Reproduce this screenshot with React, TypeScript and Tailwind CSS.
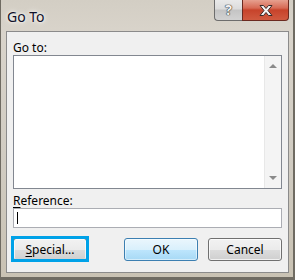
import React from "react";

const font = { fontFamily: '"Noto Sans", "Segoe UI", "Open Sans", sans-serif' };

function Btn({ children, def }: { children: React.ReactNode; def?: boolean }) {
  return (
    <div
      className={`w-[74px] h-[23px] rounded-[3px] border flex items-center justify-center text-[12px] text-black ${
        def
          ? "border-[#3c7fb1] bg-[linear-gradient(#eaf6fd_0%,#d9f0fc_50%,#bee6fd_50%,#a7d9f5_100%)] shadow-[inset_0_0_0_1px_#ffffff80]"
          : "border-[#707070] bg-[linear-gradient(#f2f2f2_0%,#ebebeb_50%,#dddddd_50%,#cfcfcf_100%)] shadow-[inset_0_0_0_1px_#ffffffb0]"
      }`}
    >
      {children}
    </div>
  );
}

export default function App() {
  return (
    <div
      className="w-[295px] h-[280px] relative overflow-hidden bg-[linear-gradient(180deg,#d3cec4_0%,#d9d4cb_12%,#d0cbc1_60%,#c9c2b3_100%)]"
      style={font}
    >
      {/* frame outer edges */}
      <div className="absolute inset-0 border-l border-r-2 border-b-[3px] border-[#6f6b62] pointer-events-none" />
      {/* title bar */}
      <div className="h-[31px] flex items-start justify-between pl-[7px] pr-[6px]">
        <div className="pt-[7px] text-[14px] leading-[19px] text-[#101028] [text-shadow:0_0_6px_#ffffff,0_0_3px_#ffffff]">
          Go To
        </div>
        <div className="flex">
          <div className="w-[28px] h-[21px] rounded-bl-[4px] border border-t-0 border-r-0 border-[#6d6d6d] bg-[linear-gradient(#e9e9e9_0%,#dcdcdc_45%,#c4c4c4_50%,#d2d2d2_100%)] flex items-center justify-center">
            <span className="text-[14px] font-bold leading-none text-[#f4f4f4] [text-shadow:0_0_1px_#333,0_0_1px_#333,0_0_1px_#333]">
              ?
            </span>
          </div>
          <div className="w-[47px] h-[21px] rounded-br-[4px] border border-t-0 border-[#6b2a20] bg-[linear-gradient(#e6a08f_0%,#d76a55_40%,#c7432b_50%,#d05a40_100%)] flex items-center justify-center">
            <svg width="16" height="13" viewBox="0 0 16 13">
              <path
                d="M2 1.5 L5.5 1.5 L8 4.5 L10.5 1.5 L14 1.5 L10 6.5 L14 11.5 L10.5 11.5 L8 8.5 L5.5 11.5 L2 11.5 L6 6.5 Z"
                fill="#f4f4f4"
                stroke="#3a2a28"
                strokeWidth="1"
                strokeLinejoin="round"
              />
            </svg>
          </div>
        </div>
      </div>
      {/* client area */}
      <div className="ml-[6px] w-[283px] h-[242px] border border-[#8b8b8b] bg-[#f0f0f0] px-[6px] flex flex-col text-[12px] text-black">
        <div className="pt-[8px] leading-[15px] h-[23px]">Go to:</div>
        <div className="h-[134px] border border-[#828790] bg-white flex justify-end">
          <div className="w-[17px] h-full bg-[#f4f4f4] border-l border-[#e8e8e8] flex flex-col items-center justify-between py-[8px]">
            <div className="w-0 h-0 border-l-[4px] border-r-[4px] border-b-[4px] border-l-transparent border-r-transparent border-b-[#8a8a8a]" />
            <div className="w-0 h-0 border-l-[4px] border-r-[4px] border-t-[4px] border-l-transparent border-r-transparent border-t-[#8a8a8a]" />
          </div>
        </div>
        <div className="pt-[4px] leading-[15px] h-[19px]">
          <span className="underline underline-offset-2">R</span>eference:
        </div>
        <div className="h-[20px] border border-[#abadb3] bg-white flex items-center pl-[3px]">
          <div className="w-px h-[12px] bg-black" />
        </div>
        <div className="mt-[10px] flex justify-between">
          <div className="relative">
            <Btn>
              <span>
                <span className="underline underline-offset-2">S</span>pecial...
              </span>
            </Btn>
            <div className="absolute -left-[2px] -top-[2px] w-[78px] h-[26px] border-[3px] border-[#00a2e8] pointer-events-none" />
          </div>
          <div className="flex gap-[10px]">
            <Btn def>OK</Btn>
            <Btn>Cancel</Btn>
          </div>
        </div>
      </div>
    </div>
  );
}
